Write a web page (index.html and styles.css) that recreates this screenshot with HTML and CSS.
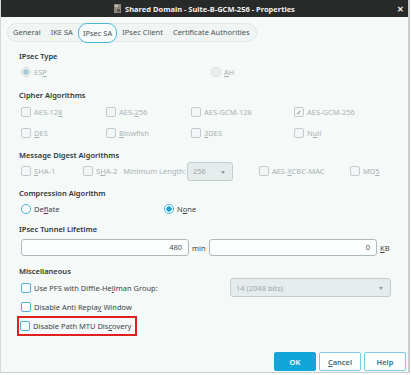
FILE: index.html
```html
<!DOCTYPE html>
<html lang="en">

<head>
    <meta charset="UTF-8">
    <title>Shared Domain - Suite-B-GCM-256 - Properties</title>
    <link rel="stylesheet" href="styles.css">
</head>

<body>
    <div class="window">
        <div class="titlebar">
            <span class="title">
                <svg class="app-icon" width="7" height="9" viewBox="0 0 7 9">
                    <rect x="0" y="0" width="7" height="9" fill="#8d8580" />
                    <rect x="1" y="1" width="3" height="2" fill="#c9c2bb" />
                    <rect x="3" y="5" width="3" height="3" fill="#5d5550" />
                </svg>
                Shared Domain - Suite-B-GCM-256 - Properties
            </span>
            <span class="close">&#x2715;</span>
        </div>

        <div class="tabs">
            <span class="tab">General</span>
            <span class="tab">IKE SA</span>
            <span class="tab active">IPsec SA</span>
            <span class="tab">IPsec Client</span>
            <span class="tab">Certificate Authorities</span>
        </div>

        <div class="content">
            <h3 class="type-title">IPsec Type</h3>
            <div class="row two-col">
                <label class="opt disabled"><span class="radio checked"></span><span>ES<u>P</u></span></label>
                <label class="opt disabled"><span class="radio"></span><span><u>A</u>H</span></label>
            </div>

            <h3 class="cipher-title">Cipher Algorithms</h3>
            <div class="grid">
                <label class="opt disabled"><span class="check"></span><span>AES-12<u>8</u></span></label>
                <label class="opt disabled"><span class="check"></span><span>AES-<u>2</u>56</span></label>
                <label class="opt disabled"><span class="check"></span><span>AES-GCM-128</span></label>
                <label class="opt disabled"><span class="check checked">&#x2713;</span><span>AES-GCM-256</span></label>
                <label class="opt disabled"><span class="check"></span><span><u>D</u>ES</span></label>
                <label class="opt disabled"><span class="check"></span><span><u>B</u>lowfish</span></label>
                <label class="opt disabled"><span class="check"></span><span><u>3</u>DES</span></label>
                <label class="opt disabled"><span class="check"></span><span>N<u>u</u>ll</span></label>
            </div>

            <h3>Message Digest Algorithms</h3>
            <div class="row digest">
                <label class="opt disabled sha1"><span class="check"></span><span><u>S</u>HA-1</span></label>
                <label class="opt disabled"><span class="check"></span><span>S<u>H</u>A-2</span></label>
                <span class="minlen">Minimum Length:</span>
                <span class="select small disabled">256<span class="caret"></span></span>
                <label class="opt disabled xcbc"><span class="check"></span><span>AES-<u>X</u>CBC-MAC</span></label>
                <label class="opt disabled md5"><span class="check"></span><span>MD<u>5</u></span></label>
            </div>

            <h3>Compression Algorithm</h3>
            <div class="row compress">
                <label class="opt"><span class="radio"></span><span>De<u>f</u>late</span></label>
                <label class="opt"><span class="radio checked"></span><span>N<u>o</u>ne</span></label>
            </div>

            <h3 class="tunnel-title">IPsec Tunnel Lifetime</h3>
            <div class="row lifetime">
                <span class="input">480</span>
                <span class="unit">min</span>
                <span class="input">0</span>
                <span class="unit"><u>K</u>B</span>
            </div>

            <h3 class="misc-title">Miscellaneous</h3>
            <div class="row misc-row pfs">
                <label class="opt"><span class="check"></span><span>Use PFS with Diffie-He<u>l</u>lman Group:</span></label>
                <span class="select wide disabled">14 (2048 bits)<span class="caret"></span></span>
            </div>
            <div class="row misc-row">
                <label class="opt"><span class="check"></span><span>Disable Anti Repla<u>y</u> Window</span></label>
            </div>
            <div class="row misc-row">
                <label class="opt highlight"><span class="check"></span><span>Disable Path MTU Dis<u>c</u>overy</span></label>
            </div>
        </div>

        <div class="buttons">
            <button type="button" class="btn primary">OK</button>
            <button type="button" class="btn"><u>C</u>ancel</button>
            <button type="button" class="btn">Help</button>
        </div>
    </div>
</body>

</html>
```

FILE: styles.css
```css
* {
    box-sizing: border-box;
}

body {
    margin: 0;
    background-color: #ffffff;
    font-family: 'Noto Sans', 'Open Sans', sans-serif;
    font-size: 7.5px;
    color: #3c4446;
}

u {
    text-decoration-thickness: 1px;
    text-underline-offset: 1px;
}

.window {
    width: 410px;
    height: 373px;
    display: flex;
    flex-direction: column;
    background-color: #f5f9f8;
    border-left: 1px solid #d4d9d9;
    border-right: 2px solid #c8cdcd;
    border-bottom: 1px solid #c8cdcd;
}

.titlebar {
    height: 17px;
    flex: none;
    display: flex;
    align-items: center;
    justify-content: center;
    position: relative;
    background-color: #282a29;
    color: #f2f2f2;
    font-weight: 700;
    font-size: 7.5px;
}

.title {
    display: flex;
    align-items: center;
    gap: 4px;
}

.close {
    position: absolute;
    right: 4px;
    top: 3px;
    font-size: 8px;
    font-weight: 700;
}

/* tab strip */
.tabs {
    align-self: flex-start;
    margin: 6px 0 0 6px;
    height: 19px;
    display: flex;
    align-items: center;
    padding-right: 1px;
    border: 1px solid #e3e9e8;
    border-radius: 10px;
    background-color: #f0f5f4;
}

.tab {
    padding: 0 5px;
    line-height: 17px;
    color: #4a5254;
}

.tab.active {
    border: 1px solid #4db6da;
    border-radius: 9px;
    background-color: #f7fbfa;
    padding: 0 4px;
    line-height: 18px;
}

.content {
    padding: 2px 0 0 18px;
}

h3 {
    margin: 6px 0 0;
    height: 12px;
    line-height: 12px;
    font-size: 7.5px;
    font-weight: 600;
    color: #2f3638;
}

h3.cipher-title {
    margin-top: 7px;
}

h3.tunnel-title {
    margin-top: 4px;
}

h3.misc-title {
    margin-top: 9px;
}

.row {
    height: 20px;
    display: flex;
    align-items: center;
    padding-left: 2px;
}

.opt {
    display: flex;
    align-items: center;
    gap: 3px;
    white-space: nowrap;
}

.opt.disabled {
    color: #a8b2b4;
}

.radio {
    width: 10px;
    height: 10px;
    border-radius: 50%;
    border: 1px solid #45b3d8;
    background-color: #fbfdfd;
    flex: none;
}

.radio.checked {
    background: radial-gradient(circle, #1ba6d8 0 2.4px, #ffffff 3px);
}

.disabled .radio {
    border-color: #d5dbdb;
    background-color: #eceff0;
}

.disabled .radio.checked {
    background: radial-gradient(circle, #a4c6d4 0 2.4px, #eceff0 3px);
}

.check {
    width: 10px;
    height: 10px;
    border-radius: 2px;
    border: 1px solid #4fb5d8;
    background-color: #fbfdfd;
    flex: none;
    display: flex;
    align-items: center;
    justify-content: center;
    font-size: 7px;
    line-height: 1;
}

.disabled .check {
    border-color: #c3cbcc;
    background-color: #f4f7f7;
    color: #7f8c90;
}

.two-col .opt:first-child {
    width: 190px;
}

.grid {
    display: grid;
    grid-template-columns: 85px 85px 103px auto;
    grid-auto-rows: 20.5px;
    align-items: center;
    padding-left: 2px;
    margin-top: 1px;
}

/* digest row */
.digest .sha1 {
    width: 62px;
}

.minlen {
    margin-left: 6px;
    color: #a8b2b4;
}

.select {
    position: relative;
    display: flex;
    align-items: center;
    height: 19px;
    padding-left: 5px;
    border: 1px solid #c2cdcf;
    border-radius: 3px;
    background-color: #e6ebec;
    color: #9fa9ab;
}

.select.small {
    width: 46px;
    margin-left: 1px;
}

.caret {
    position: absolute;
    right: 7px;
    top: 8px;
    border-left: 2.5px solid transparent;
    border-right: 2.5px solid transparent;
    border-top: 3px solid #8e989a;
}

.digest .xcbc {
    margin-left: 26px;
    width: 91px;
}

.compress .opt:first-child {
    width: 143px;
}

/* lifetime inputs */
.lifetime {
    height: 17px;
    margin-top: 4px;
}

.input {
    width: 168px;
    height: 17px;
    border: 1px solid #aeb9bb;
    border-radius: 3px;
    background-color: #fdfefe;
    text-align: right;
    padding-right: 6px;
    line-height: 15px;
    color: #4a5254;
}

.unit {
    width: 20px;
    padding-left: 3px;
}

.misc-row {
    height: 19px;
}

.pfs {
    margin-top: 1px;
}

.select.wide {
    width: 161px;
    margin-left: auto;
    margin-right: 17px;
}

.highlight {
    outline: 2px solid #e02020;
    outline-offset: 0;
    padding: 3px 4px 3px 1px;
    margin-left: -2px;
}

/* dialog buttons */
.buttons {
    margin-top: auto;
    display: flex;
    justify-content: flex-end;
    gap: 3px;
    padding: 0 2px 1px 0;
}

.btn {
    width: 42px;
    height: 19px;
    border: 1px solid #7fcbe5;
    border-radius: 2px;
    background-color: #fdfefe;
    color: #3e6d80;
    font-family: inherit;
    font-size: 7.5px;
    font-weight: 600;
    padding: 0;
}

.btn.primary {
    background-color: #11a6da;
    border-color: #11a6da;
    color: #ffffff;
}
```
